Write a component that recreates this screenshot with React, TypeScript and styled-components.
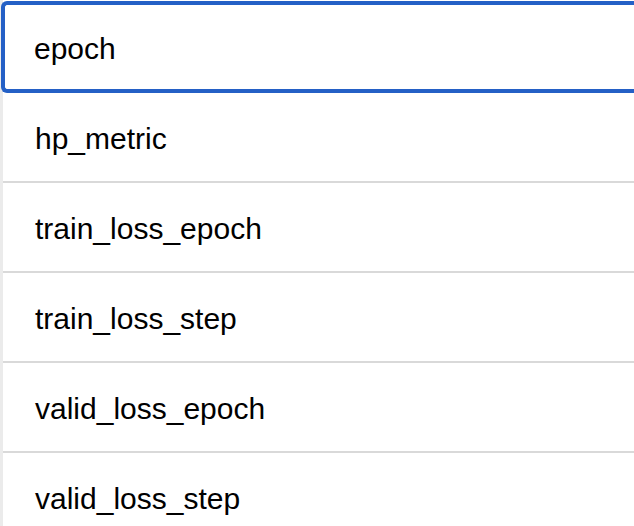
import styled, {createGlobalStyle} from 'styled-components';
import React, {useState} from 'react';

const GlobalStyle = createGlobalStyle`
  html, body {
    margin: 0;
    padding: 0;
    background: #ffffff;
    overflow: hidden;
  }
  body {
    font-family: "Liberation Sans", Arial, Helvetica, sans-serif;
    color: #000000;
  }
`

const List = styled.ul`
  list-style: none;
  margin: 0;
  padding: 1px 0 0 0;
  width: 100%;
  box-sizing: border-box;
  border-left: 3px solid #ebebeb;
`

const Item = styled.li<{$focused?: boolean}>`
  display: flex;
  align-items: center;
  box-sizing: border-box;
  font-size: 30px;
  line-height: 1;
  padding-top: 3px;
  cursor: pointer;
  ${p => p.$focused ? `
    position: relative;
    height: 92px;
    margin-left: -2px;
    padding-left: 29px;
    border: 4px solid #2460c6;
    border-right: none;
    border-radius: 6px 0 0 6px;
    background: #ffffff;
  ` : `
    height: 90px;
    padding-left: 32px;
    border-bottom: 2px solid #d9d9d9;
  `}
`

const metrics = [
    'epoch',
    'hp_metric',
    'train_loss_epoch',
    'train_loss_step',
    'valid_loss_epoch',
    'valid_loss_step',
]

const App: React.FC = () => {
    const [selected, setSelected] = useState(0)
    return (
        <>
            <GlobalStyle/>
            <List>
                {metrics.map((m, i) => (
                    <Item key={m} $focused={i === selected} onClick={() => setSelected(i)}>
                        {m}
                    </Item>
                ))}
            </List>
        </>
    )
}
export default App
